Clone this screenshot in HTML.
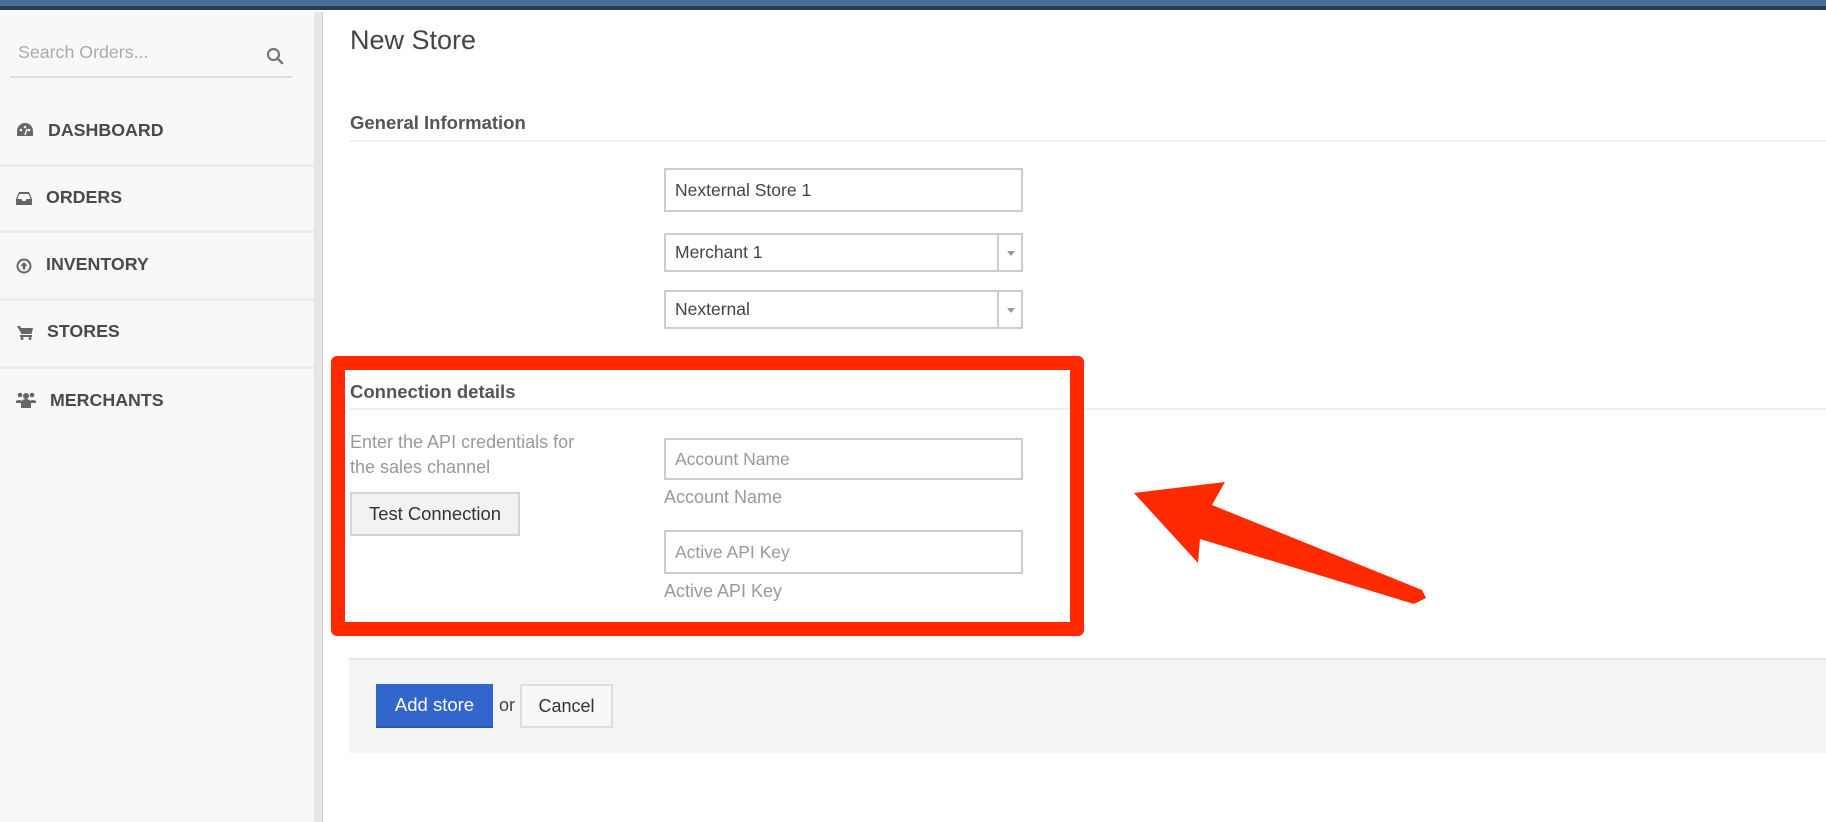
<!DOCTYPE html>
<html><head><meta charset="utf-8"><style>
*{margin:0;padding:0;box-sizing:border-box}
body{width:1826px;height:822px;position:relative;overflow:hidden;background:#fff;font-family:"Liberation Sans",Arial,sans-serif;color:#444}
.a{position:absolute}
.nav{position:absolute;left:0;width:314px;font-weight:bold;font-size:17.8px;color:#4a4a4a;line-height:20px}
.sep{position:absolute;left:0;width:314px;height:3px;background:#ececec}
.inp{position:absolute;border:2px solid #ccc;background:#fff;font-size:17.5px;color:#444;padding-left:9px;display:flex;align-items:center}
.ph{color:#999}
.dd{position:absolute;right:0;top:0;bottom:0;width:24px;border-left:2px solid #ccc}
.dd:after{content:"";position:absolute;left:8px;top:50%;margin-top:-2px;border-left:4px solid transparent;border-right:4px solid transparent;border-top:5px solid #999}
.lbl{position:absolute;font-size:18px;color:#999}
</style></head><body>
<div class="a" style="left:0;top:0;width:1826px;height:6px;background:#4a6f96"></div>
<div class="a" style="left:0;top:6px;width:1826px;height:4px;background:#2a3d50"></div>
<div class="a" style="left:0;top:12px;width:314px;height:810px;background:#f8f8f8"></div>
<div class="a" style="left:314px;top:12px;width:9px;height:810px;background:#e6e6e6;border-right:1px solid #d0d0d0"></div>
<div class="a" style="left:18px;top:42px;font-size:17.8px;color:#aaa">Search Orders...</div>
<svg class="a" style="left:266px;top:47px" width="18" height="18" viewBox="0 0 18 18"><circle cx="7.5" cy="7.5" r="5.5" fill="none" stroke="#777" stroke-width="2.2"/><path d="M11.5 11.5L16 16" stroke="#777" stroke-width="2.6" stroke-linecap="round"/></svg>
<div class="a" style="left:10px;top:76px;width:282px;height:2px;background:#ddd"></div>

<svg class="a" style="left:16px;top:122px" width="18" height="16" viewBox="0 0 18 16"><path d="M9 1A8 8 0 0 0 1 9v5h16V9A8 8 0 0 0 9 1z" fill="#666"/><circle cx="5" cy="8" r="1.3" fill="#f8f8f8"/><circle cx="9" cy="5" r="1.3" fill="#f8f8f8"/><circle cx="13" cy="8" r="1.3" fill="#f8f8f8"/><path d="M9 13l2-6" stroke="#f8f8f8" stroke-width="1.5"/></svg>
<div class="nav" style="left:48px;top:120px">DASHBOARD</div>
<div class="sep" style="top:164px"></div>
<svg class="a" style="left:15px;top:190px" width="18" height="16" viewBox="0 0 18 16"><path d="M4 2h10l3 7v6H1V9z" fill="#666"/><path d="M4.5 4h9l2 5h-4l-1 2H7.5l-1-2h-4z" fill="#f8f8f8"/></svg>
<div class="nav" style="left:46px;top:187px">ORDERS</div>
<div class="sep" style="top:230px"></div>
<svg class="a" style="left:16px;top:258px" width="16" height="16" viewBox="0 0 16 16"><circle cx="8" cy="8" r="6.5" fill="none" stroke="#666" stroke-width="2"/><path d="M8 4l3.5 4H9.3v3.5H6.7V8H4.5z" fill="#666"/></svg>
<div class="nav" style="left:46px;top:254px">INVENTORY</div>
<div class="sep" style="top:298px"></div>
<svg class="a" style="left:17px;top:324px" width="17" height="16" viewBox="0 0 17 16"><path d="M0 2h3l1 2h12l-1.5 6H4.5z" fill="#666"/><rect x="3" y="11" width="12" height="2" fill="#666"/><circle cx="5" cy="14.5" r="1.5" fill="#666"/><circle cx="13" cy="14.5" r="1.5" fill="#666"/></svg>
<div class="nav" style="left:47px;top:321px">STORES</div>
<div class="sep" style="top:366px"></div>
<svg class="a" style="left:16px;top:391px" width="20" height="18" viewBox="0 0 20 18"><circle cx="10" cy="5" r="3" fill="#666"/><circle cx="4" cy="4" r="2.3" fill="#666"/><circle cx="16" cy="4" r="2.3" fill="#666"/><path d="M5 17v-5a5 4 0 0 1 10 0v5z" fill="#666"/><path d="M0 12v-2a4 3 0 0 1 6 0v2zM14 12v-2a4 3 0 0 1 6 0v2z" fill="#666"/></svg>
<div class="nav" style="left:50px;top:390px">MERCHANTS</div>

<div class="a" style="left:350px;top:25px;font-size:27px;color:#444">New Store</div>
<div class="a" style="left:350px;top:112px;font-size:18.5px;font-weight:bold;color:#555">General Information</div>
<div class="a" style="left:350px;top:140px;width:1476px;height:2px;background:#eee"></div>

<div class="inp" style="left:664px;top:168px;width:359px;height:44px">Nexternal Store 1</div>
<div class="inp" style="left:664px;top:233px;width:359px;height:39px">Merchant 1<div class="dd"></div></div>
<div class="inp" style="left:664px;top:290px;width:359px;height:39px">Nexternal<div class="dd"></div></div>

<div class="a" style="left:350px;top:381px;font-size:18.5px;font-weight:bold;color:#555">Connection details</div>
<div class="a" style="left:350px;top:408px;width:1476px;height:2px;background:#eee"></div>
<div class="a" style="left:350px;top:430px;font-size:18px;color:#999;line-height:25px">Enter the API credentials for<br>the sales channel</div>
<div class="a" style="left:350px;top:492px;width:170px;height:44px;background:#f2f2f2;border:2px solid #d4d4d4;font-size:18.4px;color:#333;display:flex;align-items:center;justify-content:center">Test Connection</div>

<div class="inp ph" style="left:664px;top:438px;width:359px;height:42px">Account Name</div>
<div class="lbl" style="left:664px;top:487px">Account Name</div>
<div class="inp ph" style="left:664px;top:530px;width:359px;height:44px">Active API Key</div>
<div class="lbl" style="left:664px;top:581px">Active API Key</div>

<div class="a" style="left:331px;top:356px;width:753px;height:280px;border:14px solid #ff2a00;border-radius:6px"></div>
<svg class="a" style="left:0;top:0" width="1826" height="822"><polygon points="1134,493 1225,482 1212,505 1422,590 1426,598 1414,604 1200,539 1198,563" fill="#ff2a00"/></svg>

<div class="a" style="left:349px;top:658px;width:1477px;height:95px;background:#f4f4f4;border-top:2px solid #e6e6e6"></div>
<div class="a" style="left:376px;top:684px;width:117px;height:44px;background:#3366cc;border-bottom:2px solid #2a55aa;color:#fff;font-size:18.5px;display:flex;align-items:center;justify-content:center">Add store</div>
<div class="a" style="left:499px;top:695px;font-size:18px;color:#444">or</div>
<div class="a" style="left:520px;top:684px;width:93px;height:44px;background:#f8f8f8;border:2px solid #ddd;color:#333;font-size:18px;display:flex;align-items:center;justify-content:center">Cancel</div>
</body></html>
